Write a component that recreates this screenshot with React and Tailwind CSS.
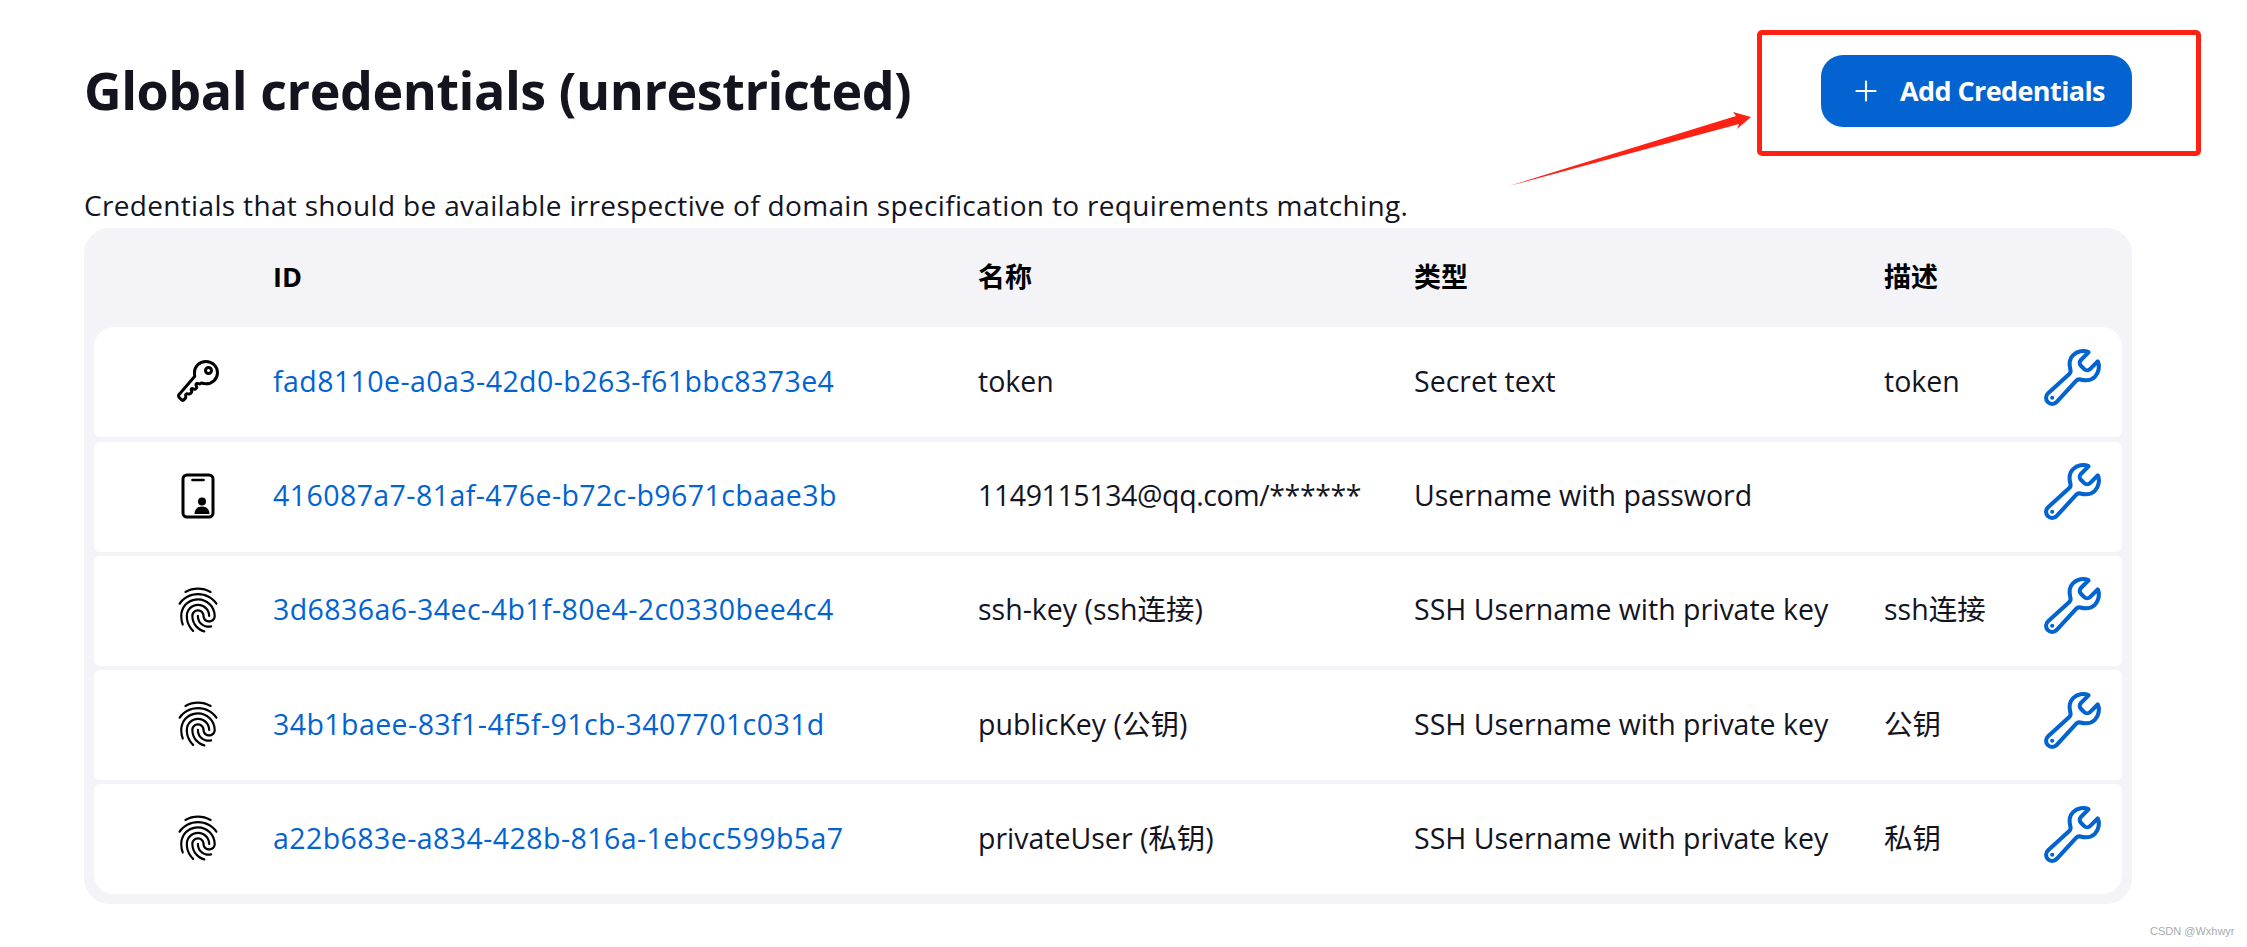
import { IoAdd, IoBuildOutline, IoFingerPrintOutline, IoKeyOutline } from 'react-icons/io5'

const FILAS = [
  { icono: 'key', id: 'fad8110e-a0a3-42d0-b263-f61bbc8373e4', nombre: 'token', tipo: 'Secret text', desc: 'token' },
  { icono: 'user', id: '416087a7-81af-476e-b72c-b9671cbaae3b', nombre: '1149115134@qq.com/******', tipo: 'Username with password', desc: '' },
  { icono: 'ssh', id: '3d6836a6-34ec-4b1f-80e4-2c0330bee4c4', nombre: 'ssh-key (ssh连接)', tipo: 'SSH Username with private key', desc: 'ssh连接' },
  { icono: 'ssh', id: '34b1baee-83f1-4f5f-91cb-3407701c031d', nombre: 'publicKey (公钥)', tipo: 'SSH Username with private key', desc: '公钥' },
  { icono: 'ssh', id: 'a22b683e-a834-428b-816a-1ebcc599b5a7', nombre: 'privateUser (私钥)', tipo: 'SSH Username with private key', desc: '私钥' },
]

const COLUMNAS = 'grid grid-cols-[179px_705px_436px_470px_1fr_100px] items-center'

function TelefonoUsuario() {
  return (
    <svg width="34" height="46" viewBox="0 0 34 46" fill="none">
      <rect x="2" y="2" width="30" height="42" rx="4" stroke="#000" strokeWidth="3" />
      <path d="M11.5 7h11" stroke="#000" strokeWidth="2.6" strokeLinecap="round" />
      <circle cx="21" cy="28.5" r="4" fill="#000" />
      <path d="M13.5 41c0-5 3.300-7.500 7.500-7.500s7.500 2.500 7.500 7.500z" fill="#000" />
    </svg>
  )
}

function Icono({ tipo }) {
  if (tipo === 'key') return <IoKeyOutline className="text-[48px] text-black" />
  if (tipo === 'user') return <TelefonoUsuario />
  return <IoFingerPrintOutline className="text-[48px] text-black" />
}

export default function App() {
  return (
    <div className="relative h-[947px] overflow-hidden bg-white font-['Open_Sans','Noto_Sans_CJK_SC',sans-serif] text-[#14141f]">
      <div className="flex flex-col px-[84px] pr-[115px]">
        <div className="flex h-[182px] items-start justify-between">
          <h1 className="mt-[51px] text-[52px] leading-[78px] font-bold tracking-[-0.45px]">Global credentials (unrestricted)</h1>
          <button className="mt-[55px] flex h-[72px] w-[311px] items-center gap-[17px] rounded-[22px] bg-[#0263d1] pl-[28px] text-[27px] font-bold tracking-[-0.6px] text-white">
            <IoAdd className="text-[34px]" />
            Add Credentials
          </button>
        </div>

        <p className="h-[46px] text-[28px] leading-[46px] tracking-[0.33px]">
          Credentials that should be available irrespective of domain specification to requirements matching.
        </p>

        <div className="flex flex-col gap-[4.25px] rounded-[26px] bg-[#f3f3f8] px-[10px] pb-[10px]">
          <div className={`${COLUMNAS} box-border h-[95px] pt-[4px] text-[27px] font-bold text-black`}>
            <span />
            <span>ID</span>
            <span>名称</span>
            <span>类型</span>
            <span>描述</span>
            <span />
          </div>
          {FILAS.map((fila, i) => (
            <div
              key={fila.id}
              className={`${COLUMNAS} h-[110px] rounded-[6px] bg-white pb-[2px] text-[28.500px] text-[#14141f] ${i === 0 ? 'rounded-t-[20px]' : ''} ${i === 4 ? 'rounded-b-[20px]' : ''}`}
            >
              <div className="flex justify-center pl-[29px]">
                <Icono tipo={fila.icono} />
              </div>
              <a className="tracking-[0.43px] text-[#0263d1]">{fila.id}</a>
              <span className={i === 1 ? 'tracking-[-0.4px]' : ''}>{fila.nombre}</span>
              <span>{fila.tipo}</span>
              <span>{fila.desc}</span>
              <div className="flex justify-center pb-[8px]">
                <IoBuildOutline className="text-[65px] text-[#0263d1]" />
              </div>
            </div>
          ))}
        </div>
      </div>

      {/* anotación roja encima de la captura */}
      <div className="absolute top-[30px] left-[1757px] h-[126px] w-[444px] rounded-[5px] border-[5px] border-[#ff2114]" />
      <svg className="absolute top-0 left-0" width="1800" height="200" fill="none">
        <path d="M1509 186 L1736 116 L1733 112 L1751 117 L1737 129 L1739 124 Z" fill="#ff2114" />
      </svg>
      <span className="absolute top-[923px] left-[2150px] font-['Liberation_Sans',sans-serif] text-[11px] text-[#aaa]">CSDN @Wxhwyr</span>
    </div>
  )
}
